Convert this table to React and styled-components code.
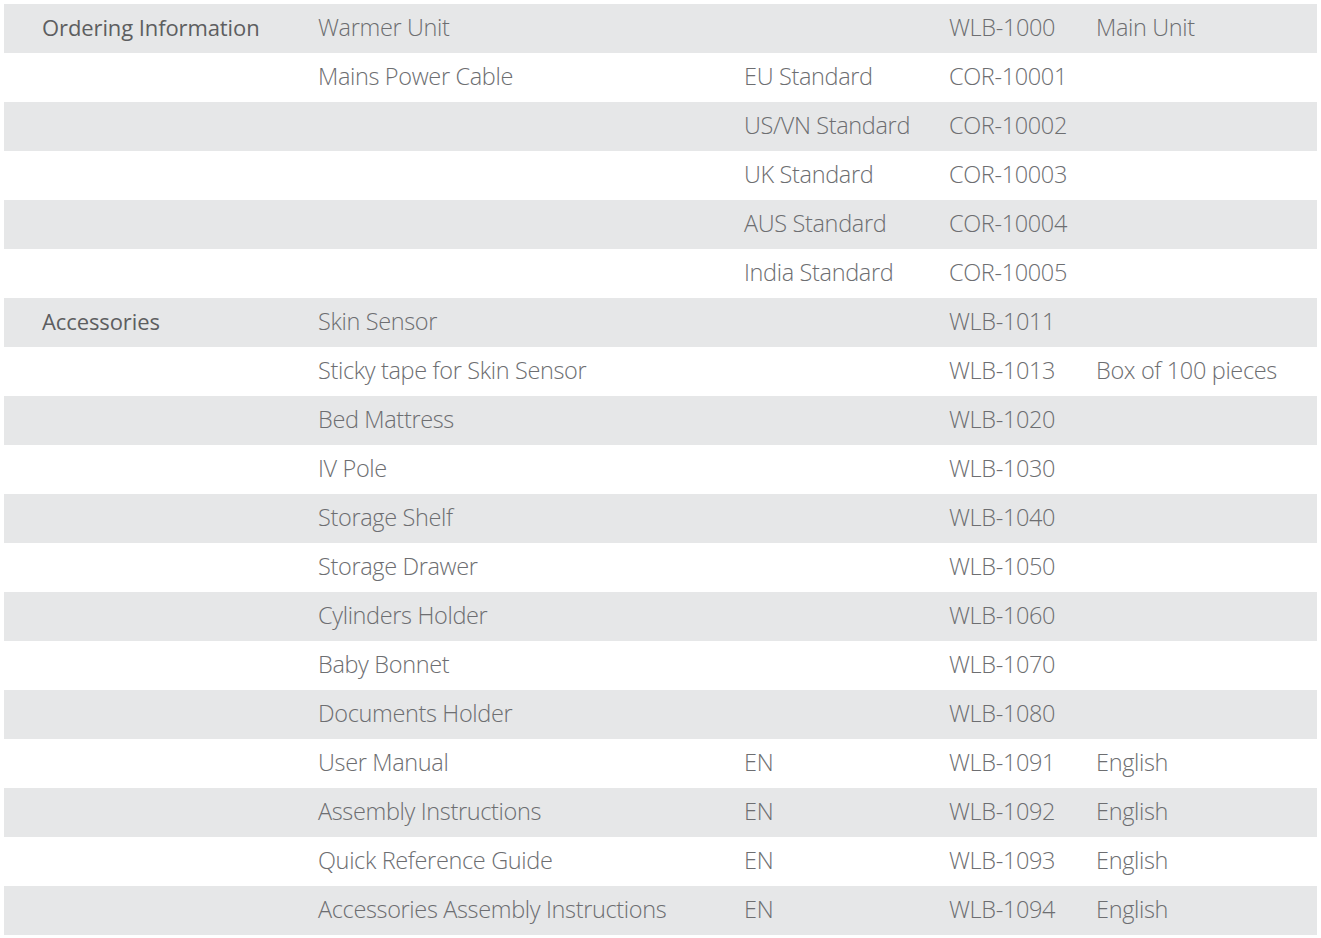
import React from "react";
import styled, { createGlobalStyle } from "styled-components";

const Global = createGlobalStyle`
  html, body { margin: 0; padding: 0; background: #ffffff; }
  body { font-family: "Open Sans", "Liberation Sans", sans-serif; }
`;

const Table = styled.div`
  margin: 4px 4px 0 4px;
  width: 1313px;
  display: flex;
  flex-direction: column;
`;

const Row = styled.div`
  display: grid;
  grid-template-columns: 314px 426px 205px 147px 221px;
  height: 49px;
  align-items: center;
  background: ${(p) => (p.$shaded ? "#e6e7e8" : "#ffffff")};
`;

const Cell = styled.div`
  font-size: 23.5px;
  font-weight: 300;
  letter-spacing: -0.35px;
  color: #6d6e71;
  white-space: nowrap;
  line-height: 1;
  padding-bottom: 1px;
`;

const Category = styled(Cell)`
  padding-left: 38px;
  padding-bottom: 3px;
  font-size: 22px;
  letter-spacing: -0.1px;
  font-weight: 400;
  color: #5d5e60;
`;

const rows = [
  ["Ordering Information", "Warmer Unit", "", "WLB-1000", "Main Unit"],
  ["", "Mains Power Cable", "EU Standard", "COR-10001", ""],
  ["", "", "US/VN Standard", "COR-10002", ""],
  ["", "", "UK Standard", "COR-10003", ""],
  ["", "", "AUS Standard", "COR-10004", ""],
  ["", "", "India Standard", "COR-10005", ""],
  ["Accessories", "Skin Sensor", "", "WLB-1011", ""],
  ["", "Sticky tape for Skin Sensor", "", "WLB-1013", "Box of 100 pieces"],
  ["", "Bed Mattress", "", "WLB-1020", ""],
  ["", "IV Pole", "", "WLB-1030", ""],
  ["", "Storage Shelf", "", "WLB-1040", ""],
  ["", "Storage Drawer", "", "WLB-1050", ""],
  ["", "Cylinders Holder", "", "WLB-1060", ""],
  ["", "Baby Bonnet", "", "WLB-1070", ""],
  ["", "Documents Holder", "", "WLB-1080", ""],
  ["", "User Manual", "EN", "WLB-1091", "English"],
  ["", "Assembly Instructions", "EN", "WLB-1092", "English"],
  ["", "Quick Reference Guide", "EN", "WLB-1093", "English"],
  ["", "Accessories Assembly Instructions", "EN", "WLB-1094", "English"],
];

export default function App() {
  return (
    <>
      <Global />
      <Table>
        {rows.map((r, i) => (
          <Row key={i} $shaded={i % 2 === 0}>
            <Category>{r[0]}</Category>
            <Cell>{r[1]}</Cell>
            <Cell>{r[2]}</Cell>
            <Cell>{r[3]}</Cell>
            <Cell>{r[4]}</Cell>
          </Row>
        ))}
      </Table>
    </>
  );
}
